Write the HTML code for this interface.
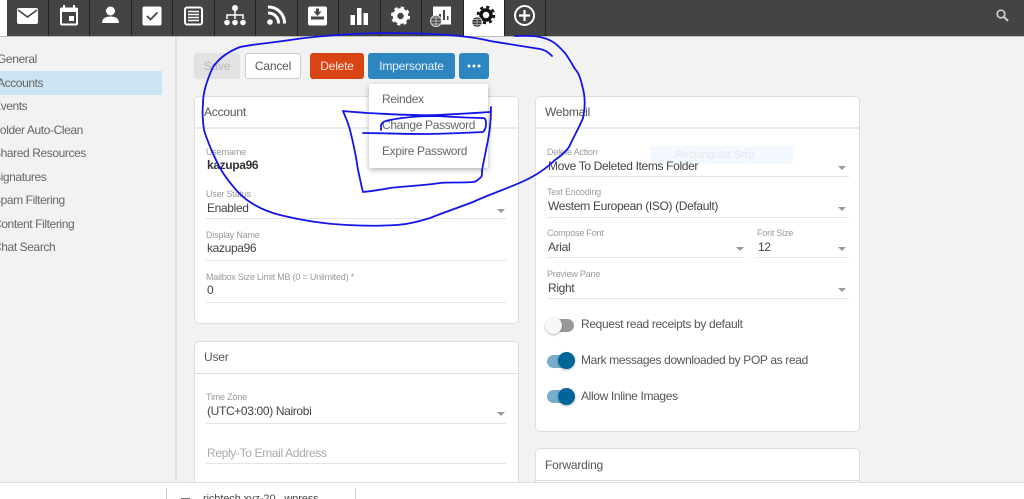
<!DOCTYPE html>
<html><head><meta charset="utf-8">
<style>
html,body{margin:0;padding:0;width:1024px;height:499px;overflow:hidden;background:#f2f2f2;font-family:"Liberation Sans",sans-serif;color:#555}
#w{position:relative;width:1024px;height:499px;overflow:hidden;background:#f2f2f2}
.a{position:absolute;white-space:nowrap}
.nav{font-size:12px;color:#666;left:-3px;letter-spacing:-.4px}
.card{position:absolute;background:#fff;border:1px solid #ddd;border-radius:5px;box-sizing:border-box}
.h{font-size:12px;color:#555;letter-spacing:-.2px}
.l{font-size:9px;color:#9a9a9a;letter-spacing:-.2px}
.v{font-size:12px;color:#444;letter-spacing:-.35px}
.u{position:absolute;height:1px;background:#e4e4e4}
.t{position:absolute;width:0;height:0;border-left:4px solid transparent;border-right:4px solid transparent;border-top:4px solid #999}
.b{position:absolute;top:53px;height:26px;line-height:26px;text-align:center;font-size:12px;border-radius:3px;box-sizing:border-box;letter-spacing:-.2px}
.m{font-size:12px;color:#666;left:382px;letter-spacing:-.33px}
.track{position:absolute;left:547px;width:27px;height:13px;border-radius:7px}
.knob{position:absolute;width:17px;height:17px;border-radius:50%;box-shadow:0 1px 2px rgba(0,0,0,.3)}
.sep{position:absolute;top:0;width:1px;height:36px;background:#222}
</style></head><body><div id="w">
<div class="a" style="left:0;top:0;width:1024px;height:37px;background:#fff"></div>
<div class="a" style="left:7px;top:0;width:1017px;height:36px;background:#444"></div>
<div class="a" style="left:463px;top:0;width:41px;height:36px;background:#fff"></div>
<div class="sep" style="left:48px"></div><div class="sep" style="left:89px"></div><div class="sep" style="left:131px"></div><div class="sep" style="left:172px"></div><div class="sep" style="left:214px"></div><div class="sep" style="left:255px"></div><div class="sep" style="left:297px"></div><div class="sep" style="left:338px"></div><div class="sep" style="left:380px"></div><div class="sep" style="left:421px"></div><div class="sep" style="left:463px"></div><div class="sep" style="left:504px"></div><div class="sep" style="left:545px"></div>
<div class="a" style="left:0;top:36px;width:1024px;height:1px;background:#bbb"></div>

<svg class="a" style="left:0;top:0" width="1024" height="37" viewBox="0 0 1024 37">
<!-- mail -->
<rect x="17" y="8" width="21" height="16" rx="2" fill="#fff"/><path d="M18 10l9.500 7 9.500-7" fill="none" stroke="#444" stroke-width="1.600"/>
<!-- calendar -->
<rect x="61" y="8.500" width="16" height="16" rx="1" fill="none" stroke="#fff" stroke-width="2"/><rect x="60" y="8" width="18" height="4" fill="#fff"/><rect x="63" y="5" width="2" height="4" fill="#fff"/><rect x="73" y="5" width="2" height="4" fill="#fff"/><rect x="69" y="16" width="5" height="5" fill="#fff"/>
<!-- person -->
<circle cx="110.500" cy="11" r="4.500" fill="#fff"/><path d="M102 23c0-5 4-6.500 8.500-6.500s8.500 1.500 8.500 6.500z" fill="#fff"/>
<!-- check -->
<rect x="142.500" y="6.500" width="19" height="19" rx="2" fill="#fff"/><path d="M147 16l3.500 3.500 7-7" fill="none" stroke="#444" stroke-width="1.800"/>
<!-- list -->
<rect x="185" y="7.500" width="17" height="17" rx="2" fill="none" stroke="#fff" stroke-width="2"/><path d="M188 11.500h11M188 14.500h11M188 17.500h11M188 20.500h11" stroke="#fff" stroke-width="1.500"/>
<!-- sitemap -->
<circle cx="235" cy="8" r="3" fill="#fff"/><circle cx="227" cy="22.500" r="2.800" fill="#fff"/><circle cx="235" cy="22.500" r="2.800" fill="#fff"/><circle cx="243" cy="22.500" r="2.800" fill="#fff"/><path d="M235 10v9M227 19v-4h16v4" fill="none" stroke="#fff" stroke-width="1.500"/>
<!-- rss -->
<circle cx="270" cy="22" r="2.800" fill="#fff"/><path d="M268 13a10 10 0 0 1 10.500 10.500M268 7a16 16 0 0 1 16.500 16.500" fill="none" stroke="#fff" stroke-width="3"/>
<!-- inbox -->
<rect x="308" y="6.500" width="19" height="19" rx="2" fill="#fff"/><path d="M313.500 11.500h8l-4 4.500zM311 16.500v3h13v-3" fill="#444"/><path d="M316 8.500h3v4h-3z" fill="#444"/>
<!-- bars -->
<rect x="350.500" y="15" width="4.500" height="10" fill="#fff"/><rect x="357" y="8" width="4.500" height="17" fill="#fff"/><rect x="363.500" y="13" width="4.500" height="12" fill="#fff"/>
<!-- gear -->
<circle cx="400.500" cy="16" r="5.500" fill="none" stroke="#fff" stroke-width="4.500"/><circle cx="400.500" cy="16" r="8.300" fill="none" stroke="#fff" stroke-width="2.500" stroke-dasharray="3.300 3.220"/>
<!-- report + globe -->
<rect x="433" y="6.500" width="18" height="18" fill="#fff"/><rect x="439" y="14" width="2" height="6" fill="#444"/><rect x="443" y="10" width="2" height="10" fill="#444"/><rect x="447" y="16" width="1.500" height="4" fill="#444"/>
<circle cx="436" cy="21" r="5.500" fill="#444" stroke="#ddd" stroke-width="1"/><path d="M431 21h10M436 16v10M432 18h8M432 24h8" stroke="#ddd" stroke-width=".7"/>
<!-- gear black + globe -->
<circle cx="486" cy="15" r="5" fill="none" stroke="#111" stroke-width="3.500"/><circle cx="486" cy="15" r="8" fill="none" stroke="#111" stroke-width="2.500" stroke-dasharray="3.100 3.180"/>
<circle cx="477" cy="22" r="5.500" fill="#fff"/><circle cx="477" cy="22" r="4.800" fill="#333"/><path d="M472 22h10M477 17v10M473 19.500h8M473 24.500h8" stroke="#ccc" stroke-width=".7"/>
<!-- plus -->
<circle cx="524.500" cy="15.500" r="9.500" fill="none" stroke="#fff" stroke-width="2"/><path d="M519 15.500h11M524.500 10v11" stroke="#fff" stroke-width="2.200"/>
<!-- search -->
<circle cx="1001" cy="14" r="3.800" fill="none" stroke="#ccc" stroke-width="1.700"/><path d="M1004 17l4 4" stroke="#ccc" stroke-width="2"/>
</svg>

<div class="a" style="left:175px;top:37px;width:2px;height:445px;background:#e4e4e4"></div>
<div class="a" style="left:0;top:71px;width:162px;height:24px;background:#cbe4f2"></div>
<div class="a nav" style="top:52px">General</div>
<div class="a nav" style="top:76px">Accounts</div>
<div class="a nav" style="top:99px;left:-7px">Events</div>
<div class="a nav" style="top:123px;left:-7px">Folder Auto-Clean</div>
<div class="a nav" style="top:146px;left:-7px">Shared Resources</div>
<div class="a nav" style="top:170px;left:-7px">Signatures</div>
<div class="a nav" style="top:193px;left:-7px">Spam Filtering</div>
<div class="a nav" style="top:217px;left:-7px">Content Filtering</div>
<div class="a nav" style="top:240px;left:-7px">Chat Search</div>

<div class="b" style="left:194px;width:46px;background:#e2e2e2;color:#b9b9b9">Save</div>
<div class="b" style="left:245px;width:56px;background:#fff;border:1px solid #ccc;color:#555;line-height:24px">Cancel</div>
<div class="b" style="left:310px;width:54px;background:#d94415;color:#f5e6e0">Delete</div>
<div class="b" style="left:368px;width:87px;background:#2e86c1;color:#e6f0f8">Impersonate</div>
<div class="b" style="left:459px;width:30px;background:#2e86c1"></div>
<svg class="a" style="left:459px;top:53px" width="30" height="26"><circle cx="10" cy="13" r="1.500" fill="#fff"/><circle cx="15" cy="13" r="1.500" fill="#fff"/><circle cx="20" cy="13" r="1.500" fill="#fff"/></svg>

<!-- Account card -->
<div class="card" style="left:194px;top:96px;width:325px;height:228px"></div>
<div class="a h" style="left:204px;top:105px">Account</div>
<div class="a" style="left:195px;top:127px;width:323px;height:2px;background:#ebebeb"></div>
<div class="a l" style="left:206px;top:147px">Username</div>
<div class="a v" style="left:207px;top:158px;font-weight:bold;color:#333">kazupa96</div>
<div class="a l" style="left:206px;top:189px">User Status</div>
<div class="a v" style="left:207px;top:201px">Enabled</div>
<div class="u" style="left:206px;top:218px;width:300px"></div><div class="t" style="left:497px;top:209px"></div>
<div class="a l" style="left:206px;top:230px">Display Name</div>
<div class="a v" style="left:207px;top:241px">kazupa96</div>
<div class="u" style="left:206px;top:260px;width:300px"></div>
<div class="a l" style="left:206px;top:272px">Mailbox Size Limit MB (0 = Unlimited) *</div>
<div class="a v" style="left:207px;top:283px">0</div>
<div class="u" style="left:206px;top:302px;width:300px"></div>

<!-- User card -->
<div class="card" style="left:194px;top:341px;width:325px;height:170px"></div>
<div class="a h" style="left:204px;top:350px">User</div>
<div class="a" style="left:195px;top:373px;width:323px;height:1px;background:#ddd"></div>
<div class="a l" style="left:206px;top:392px">Time Zone</div>
<div class="a v" style="left:207px;top:404px">(UTC+03:00) Nairobi</div>
<div class="u" style="left:206px;top:423px;width:300px"></div><div class="t" style="left:497px;top:412px"></div>
<div class="a v" style="left:207px;top:446px;color:#aaa">Reply-To Email Address</div>
<div class="u" style="left:206px;top:463px;width:300px"></div>

<!-- Webmail card -->
<div class="card" style="left:535px;top:96px;width:325px;height:336px"></div>
<div class="a h" style="left:545px;top:105px">Webmail</div>
<div class="a" style="left:536px;top:127px;width:323px;height:2px;background:#ebebeb"></div>
<div class="a" style="left:650px;top:146px;width:143px;height:18px;background:#f3f9fe"></div>
<div class="a" style="left:675px;top:149px;font-size:11px;color:#e2e8ec;letter-spacing:-.3px">Rectangular Snip</div>
<div class="a l" style="left:547px;top:147px">Delete Action</div>
<div class="a v" style="left:548px;top:159px">Move To Deleted Items Folder</div>
<div class="u" style="left:547px;top:176px;width:302px"></div><div class="t" style="left:838px;top:166px"></div>
<div class="a l" style="left:547px;top:187px">Text Encoding</div>
<div class="a v" style="left:548px;top:199px">Western European (ISO) (Default)</div>
<div class="u" style="left:547px;top:217px;width:302px"></div><div class="t" style="left:838px;top:207px"></div>
<div class="a l" style="left:547px;top:228px">Compose Font</div>
<div class="a v" style="left:548px;top:240px">Arial</div>
<div class="u" style="left:547px;top:257px;width:198px"></div><div class="t" style="left:736px;top:247px"></div>
<div class="a l" style="left:757px;top:228px">Font Size</div>
<div class="a v" style="left:758px;top:240px">12</div>
<div class="u" style="left:757px;top:257px;width:92px"></div><div class="t" style="left:838px;top:247px"></div>
<div class="a l" style="left:547px;top:269px">Preview Pane</div>
<div class="a v" style="left:548px;top:281px">Right</div>
<div class="u" style="left:547px;top:298px;width:302px"></div><div class="t" style="left:838px;top:288px"></div>

<div class="track" style="top:319px;background:#999"></div><div class="knob" style="left:545px;top:317px;background:#f8f8f8"></div>
<div class="a v" style="left:581px;top:317px;color:#555">Request read receipts by default</div>
<div class="track" style="top:355px;background:#78aecb"></div><div class="knob" style="left:558px;top:352px;background:#006699"></div>
<div class="a v" style="left:581px;top:353px;color:#555">Mark messages downloaded by POP as read</div>
<div class="track" style="top:390px;background:#78aecb"></div><div class="knob" style="left:558px;top:388px;background:#006699"></div>
<div class="a v" style="left:581px;top:389px;color:#555">Allow Inline Images</div>

<!-- Forwarding -->
<div class="card" style="left:535px;top:448px;width:325px;height:60px"></div>
<div class="a h" style="left:545px;top:458px">Forwarding</div>
<div class="a" style="left:536px;top:480px;width:323px;height:1px;background:#ddd"></div>

<!-- Dropdown -->
<div class="a" style="left:369px;top:84px;width:119px;height:84px;background:#fff;box-shadow:0 2px 6px rgba(0,0,0,.3);border-radius:2px"></div>
<div class="a m" style="top:92px">Reindex</div>
<div class="a m" style="top:118px">Change Password</div>
<div class="a m" style="top:144px">Expire Password</div>

<!-- Bottom bar -->
<div class="a" style="left:0;top:482px;width:1024px;height:17px;background:#fff;border-top:1px solid #ddd;box-sizing:border-box"></div>
<div class="a" style="left:166px;top:488px;width:1px;height:11px;background:#ccc"></div>
<div class="a" style="left:355px;top:488px;width:1px;height:11px;background:#ccc"></div>
<div class="a" style="left:181px;top:498px;width:9px;height:1px;background:#777"></div>
<div class="a" style="left:203px;top:493px;font-size:11px;color:#444;letter-spacing:-.1px">richtech.xyz-20...wpress</div>

<!-- Ink -->
<svg class="a" style="left:0;top:0" width="1024" height="499" viewBox="0 0 1024 499" fill="none" stroke="#1414e6" stroke-width="1.800" stroke-linecap="round" stroke-linejoin="round">
<path d="M552 56C548 52 545 50 540 49L490 41C470 36 440 33 380 33C340 34 310 37 290 40C270 43 255 44 240 47C225 53 218 60 213 67C207 80 203 92 203 103C202 115 203 122 204 130C207 140 215 160 223 173C232 186 240 195 247 200C258 208 268 212 280 215C300 220 325 224 347 225C365 226 380 226 397 225C410 224 420 221 430 218C445 212 460 207 473 202C495 192 515 186 530 178C545 170 552 163 555 160C562 155 568 150 570 145C573 138 578 130 583 118C586 105 585 95 582 85C580 76 578 72 575 69C572 64 570 60 565 53C560 48 558 45 553 42C545 37 535 35 515 36"/>
<path d="M343 111C350 112 358 112 367 113C390 114 415 116 437 115C460 114 475 113 490 112M491 107C491 120 490 130 488 140C486 150 484 160 482 170C482 175 482 177 480 178C477 181 475 182 473 182C460 183 450 182 440 183C420 186 405 186 390 188C380 190 372 191 363 192C361 185 360 178 358 170C356 155 353 142 350 130C348 122 345 116 343 111"/>
<path d="M363 133C380 133 400 134 423 134C440 134 462 133 483 132C486 129 486 126 486 123C486 120 485 118 483 118C470 118 455 117 437 116C420 116 405 117 390 120C385 121 382 122 381 125C381 127 381 129 381 130"/>
</svg>
</div></body></html>
